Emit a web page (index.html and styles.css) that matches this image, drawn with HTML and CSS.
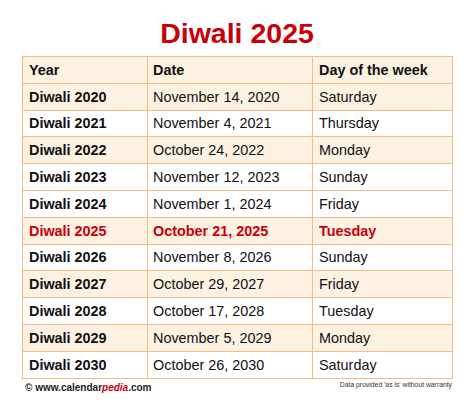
FILE: index.html
```html
<!DOCTYPE html>
<html>
<head>
<meta charset="utf-8">
<link rel="stylesheet" href="styles.css">
</head>
<body>
<div class="page">
  <h1 class="title">Diwali 2025</h1>
  <table class="cal">
    <colgroup><col class="c1"><col class="c2"><col class="c3"></colgroup>
    <thead>
      <tr class="shade"><th>Year</th><th>Date</th><th>Day of the week</th></tr>
    </thead>
    <tbody>
      <tr class="shade"><td class="yr">Diwali 2020</td><td>November 14, 2020</td><td>Saturday</td></tr>
      <tr><td class="yr">Diwali 2021</td><td>November 4, 2021</td><td>Thursday</td></tr>
      <tr class="shade"><td class="yr">Diwali 2022</td><td>October 24, 2022</td><td>Monday</td></tr>
      <tr><td class="yr">Diwali 2023</td><td>November 12, 2023</td><td>Sunday</td></tr>
      <tr><td class="yr">Diwali 2024</td><td>November 1, 2024</td><td>Friday</td></tr>
      <tr class="shade hl"><td class="yr">Diwali 2025</td><td>October 21, 2025</td><td>Tuesday</td></tr>
      <tr><td class="yr">Diwali 2026</td><td>November 8, 2026</td><td>Sunday</td></tr>
      <tr class="shade"><td class="yr">Diwali 2027</td><td>October 29, 2027</td><td>Friday</td></tr>
      <tr><td class="yr">Diwali 2028</td><td>October 17, 2028</td><td>Tuesday</td></tr>
      <tr class="shade"><td class="yr">Diwali 2029</td><td>November 5, 2029</td><td>Monday</td></tr>
      <tr><td class="yr">Diwali 2030</td><td>October 26, 2030</td><td>Saturday</td></tr>
    </tbody>
  </table>
  <div class="foot">
    <span class="site">© www.calendar<em>pedia</em>.com</span>
    <span class="note">Data provided 'as is' without warranty</span>
  </div>
</div>
</body>
</html>
```
FILE: styles.css
```css
html, body {
  margin: 0;
  padding: 0;
  background: #ffffff;
}
body {
  font-family: "Liberation Sans", Arial, sans-serif;
  color: #111111;
}
.page {
  width: 474px;
  height: 413px;
  padding-top: 19px;
  box-sizing: border-box;
}
.title {
  margin: 0 0 8px 0;
  font-size: 28.5px;
  line-height: 29px;
  height: 29px;
  font-weight: bold;
  color: #c80008;
  text-align: center;
}
.cal {
  margin-left: 22px;
  width: 430px;
  border-collapse: collapse;
  table-layout: fixed;
  font-size: 14.4px;
}
.c1 { width: 125px; }
.c2 { width: 165px; }
.c3 { width: 140px; }
.cal th, .cal td {
  border: 1px solid #f4bd88;
  height: 25.8px;
  padding: 0 0 0 6px;
  text-align: left;
  white-space: nowrap;
  line-height: 16px;
}
.cal td:nth-child(2), .cal th:nth-child(2) { padding-left: 5px; }
.cal th { font-weight: bold; }
.cal .yr { font-weight: bold; }
.cal tr.shade { background: #fdf1e2; }
.cal tr.hl td { color: #c80008; font-weight: bold; }
.foot {
  margin: 3px 0 0 25px;
  width: 427px;
  display: flex;
  justify-content: space-between;
  align-items: flex-start;
}
.site {
  font-size: 10px;
  font-weight: bold;
  color: #222;
  line-height: 12px;
}
.site em {
  color: #c80008;
  font-style: italic;
}
.note {
  font-size: 6.8px;
  color: #333;
  line-height: 8px;
  margin-top: -1px;
}
```
